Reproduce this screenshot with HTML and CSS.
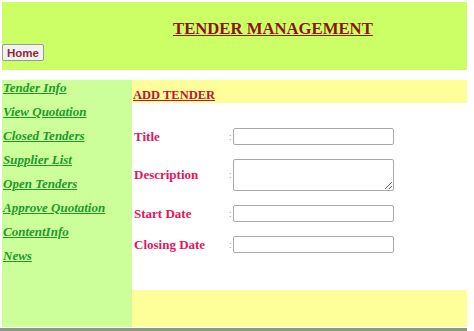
FILE: index.html
```html
<!DOCTYPE html>
<html lang="en">
<head>
    <meta charset="UTF-8">
    <title>Tender Management</title>
    <link rel="stylesheet" href="styles.css">
</head>
<body>
    <div class="page">
        <div class="header">
            <h1 class="title"><u>TENDER MANAGEMENT</u></h1>
            <button class="homeBtn">Home</button>
        </div>

        <div class="main">
            <div class="sidebar">
                <a href="#">Tender Info</a>
                <a href="#">View Quotation</a>
                <a href="#">Closed Tenders</a>
                <a href="#">Supplier List</a>
                <a href="#">Open Tenders</a>
                <a href="#">Approve Quotation</a>
                <a href="#">ContentInfo</a>
                <a href="#">News</a>
            </div>

            <div class="content">
                <div class="band"><u>ADD TENDER</u></div>

                <div class="form">
                    <label>Title</label>
                    <span class="colon">:</span>
                    <input type="text">

                    <label>Description</label>
                    <span class="colon">:</span>
                    <textarea></textarea>

                    <label>Start Date</label>
                    <span class="colon">:</span>
                    <input type="text">

                    <label>Closing Date</label>
                    <span class="colon">:</span>
                    <input type="text">
                </div>

                <div class="footer"></div>
            </div>
        </div>
    </div>
    <div class="bottomBar"></div>
</body>
</html>
```

FILE: styles.css
```css
body {
    margin:             0;
    background-color:   #fff;
    font-family:        "Liberation Serif", "Times New Roman", serif;
}

.page {
    width:              465px;
    margin:             2px 0 0 2px;
}

.header {
    background-color:   #ccff66;
    height:             68px;
    box-sizing:         border-box;
    padding-top:        17px;
}

.title {
    margin:             0 0 0 171px;
    font-size:          16.7px;
    line-height:        20px;
    color:              #8b1515;
}

.homeBtn {
    display:            block;
    margin-top:         5px;
    height:             17px;
    padding:            0 4px;
    font-family:        "Liberation Sans", Arial, sans-serif;
    font-size:          11.5px;
    font-weight:        bold;
    color:              #8a2a3a;
    background-color:   #f2f2f2;
    border:             1px solid #9a9a9a;
    border-radius:      2px;
}

.main {
    display:            flex;
    margin-top:         10px;
    height:             247px;
}

.sidebar {
    width:              130px;
    background-color:   #ccff99;
    display:            flex;
    flex-direction:     column;
    gap:                9px;
}

.sidebar a {
    display:            block;
    padding-left:       1px;
    font-size:          13px;
    line-height:        15px;
    font-weight:        bold;
    font-style:         italic;
    color:              #1f9a2a;
}

.content {
    flex:               1;
    display:            flex;
    flex-direction:     column;
}

.band {
    background-color:   #ffff99;
    height:             23px;
    box-sizing:         border-box;
    padding:            8px 0 0 1px;
    font-size:          12.5px;
    line-height:        15px;
    font-weight:        bold;
    color:              #c0103a;
}

.form {
    display:            grid;
    grid-template-columns: 95px 4px 161px;
    row-gap:            14px;
    align-items:        center;
    margin:             25px 0 0 2px;
}

.form label {
    font-size:          13px;
    font-weight:        bold;
    color:              #e3155e;
}

.colon {
    font-family:        "Liberation Sans", Arial, sans-serif;
    font-size:          9px;
    color:              #999;
}

.form input,
.form textarea {
    box-sizing:         border-box;
    width:              161px;
    margin:             0;
    border:             1px solid #a9a9a9;
    border-radius:      2px;
    background:         #fff;
}

.form input            { height: 17px; }
.form textarea         { height: 32px; }

.footer {
    margin-top:         auto;
    height:             37px;
    background-color:   #ffff99;
}

.bottomBar {
    width:              467px;
    height:             4px;
    margin-top:         1px;
    background-color:   #8a9983;
}
```
